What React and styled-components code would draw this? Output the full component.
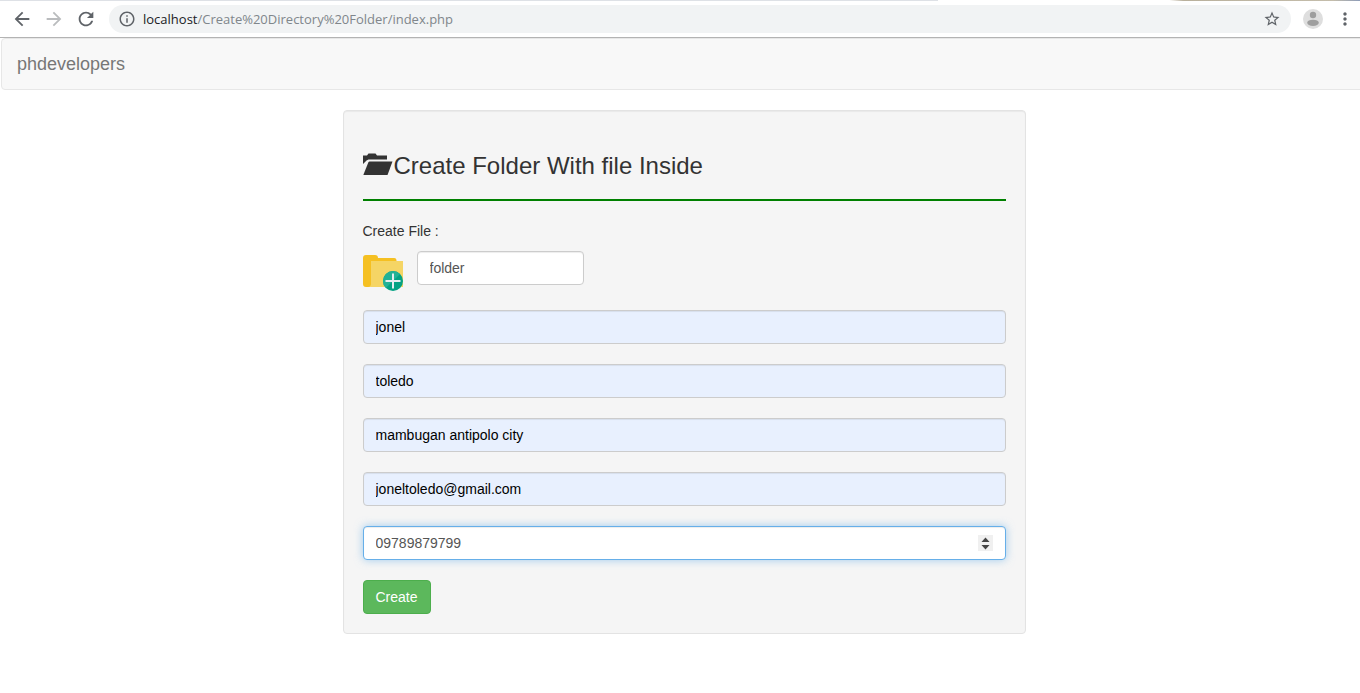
import { useState } from "react";
import styled, { createGlobalStyle, css } from "styled-components";
import {
  MdArrowBack,
  MdArrowForward,
  MdRefresh,
  MdInfoOutline,
  MdStarBorder,
  MdMoreVert
} from "react-icons/md";

const GlobalStyle = createGlobalStyle`
  * {
    box-sizing: border-box;
  }
  body {
    margin: 0;
    background: #fff;
    color: #333;
    font-family: "Liberation Sans", Arial, sans-serif;
    font-size: 14px;
    line-height: 20px;
    overflow-x: hidden;
  }
`;

const Toolbar = styled.header`
  display: flex;
  align-items: center;
  gap: 12px;
  height: 38px;
  padding: 0 5px 0 11px;
  border-bottom: 1px solid #b3b3b3;
  background: #fff
    linear-gradient(
      90deg,
      #dee1e6 69%,
      #fff 69%,
      #fff 86%,
      #b9b09c 87%,
      #c4bdab 98%,
      #8e9cb8 100%
    )
    top / 100% 1px no-repeat;
`;

const NavButtons = styled.div`
  display: flex;
  gap: 10px;
`;

const ToolButton = styled.button`
  display: flex;
  padding: 0;
  border: 0;
  background: none;
  color: ${props => (props.disabled ? "#babcbe" : "#5f6368")};
`;

const AddressBar = styled.div`
  flex: 1;
  display: flex;
  align-items: center;
  gap: 7px;
  height: 28px;
  padding: 0 10px 0 9px;
  border-radius: 14px;
  background: #f1f3f4;
  color: #5f6368;
`;

const Url = styled.span`
  flex: 1;
  color: #80868b;
  font-family: "Open Sans", "Noto Sans", sans-serif;
  font-size: 13px;
  b {
    color: #202124;
    font-weight: 400;
  }
`;

const Page = styled.div`
  margin: 0 -7px 0 1px;
`;

const Navbar = styled.nav`
  height: 52px;
  margin-bottom: 20px;
  padding: 15px;
  border: 1px solid #e7e7e7;
  border-radius: 4px;
  background: #f8f8f8;
  a {
    color: #777;
    font-size: 18px;
    text-decoration: none;
  }
`;

const Well = styled.main`
  width: 50%;
  margin: 0 auto 20px;
  padding: 19px;
  border: 1px solid #e3e3e3;
  border-radius: 4px;
  background: #f5f5f5;
  box-shadow: inset 0 1px 1px rgba(0, 0, 0, 0.05);
`;

const Title = styled.h3`
  display: flex;
  align-items: center;
  gap: 1px;
  margin: 20px 0 18px;
  color: #333;
  font-size: 24px;
  font-weight: 400;
  line-height: 31px;
`;

const Divider = styled.hr`
  margin: 0 0 20px;
  border: 0;
  border-top: 2px solid green;
`;

const Form = styled.form`
  display: flex;
  flex-direction: column;
  align-items: flex-start;
  gap: 20px;
`;

const FileGroup = styled.div`
  label {
    display: block;
    margin-bottom: 10px;
  }
`;

const FileRow = styled.div`
  display: flex;
  gap: 14px;
  height: 39px;
`;

const Input = styled.input`
  width: ${props => (props.$small ? "167px" : "100%")};
  height: 34px;
  padding: 6px 12px;
  border: 1px solid #ccc;
  border-radius: 4px;
  background: ${props => (props.$filled ? "#e8f0fe" : "#fff")};
  color: ${props => (props.$filled ? "#000" : "#555")};
  box-shadow: inset 0 1px 1px rgba(0, 0, 0, 0.075);
  font: inherit;
  outline: 0;
  appearance: textfield;
  &::-webkit-inner-spin-button {
    appearance: none;
  }
  ${props =>
    props.$active &&
    css`
      border-color: #66afe9;
      box-shadow: inset 0 1px 1px rgba(0, 0, 0, 0.075),
        0 0 8px rgba(102, 175, 233, 0.6);
    `}
`;

const NumberField = styled.div`
  position: relative;
  width: 100%;
`;

const Spinner = styled.div`
  position: absolute;
  top: 9px;
  right: 13px;
  display: flex;
  flex-direction: column;
  background: #f0f0f0;
  button {
    display: flex;
    padding: 0;
    border: 0;
    background: none;
  }
`;

const CreateButton = styled.button`
  height: 34px;
  padding: 6px 12px;
  border: 1px solid #4cae4c;
  border-radius: 4px;
  background: #5cb85c;
  color: #fff;
  font: inherit;
`;

const Avatar = () => (
  <svg width="20" height="20" viewBox="0 0 20 20">
    <circle cx="10" cy="10" r="10" fill="#dedede" />
    <circle cx="10" cy="6" r="3.2" fill="#9e9e9e" />
    <ellipse cx="10" cy="13.8" rx="5.8" ry="3.1" fill="#9e9e9e" />
  </svg>
);

const OpenFolder = () => (
  <svg width="30" height="28" viewBox="0 0 30 28" fill="#333">
    <path d="M0 12V3.500h4L5.500 1.500h7l1.500 2h10V7.500H5.500L3.500 8.500z" />
    <path d="M6.500 9.500H29.500L24.500 23H.5V22.500L5.500 10z" />
  </svg>
);

const AddFolder = () => (
  <svg width="40" height="41" viewBox="0 0 40 41">
    <path d="M3 4h9c2 0 3 1 3 3h16c2 0 2.500 1 2.500 3v26H3c-2 0-3-1-3-3V7c0-2 1-3 3-3z" fill="#f5c022" />
    <path d="M8 10h32v26H5c2 0 3-1.500 3-3z" fill="#f5d565" />
    <circle cx="30" cy="30" r="10" fill="#04a283" />
    <path d="M22.900 37.100A10 10 0 0 1 37.100 22.900z" fill="#22b296" />
    <path d="M30 22.500v15M22.500 30h15" stroke="#e6edf0" strokeWidth="2" />
  </svg>
);

const fields = [
  { name: "firstname", label: "First name", value: "jonel" },
  { name: "lastname", label: "Last name", value: "toledo" },
  { name: "address", label: "Address", value: "mambugan antipolo city" },
  { name: "email", label: "Email", value: "joneltoledo@gmail.com", type: "email" }
];

const Contact = () => {
  const [value, setValue] = useState("09789879799");
  const step = amount => () =>
    setValue(String(Number(value) + amount).padStart(11, "0"));
  return (
    <NumberField>
      <Input
        type="number"
        name="contact"
        aria-label="Contact number"
        value={value}
        onChange={e => setValue(e.target.value)}
        $active
      />
      <Spinner>
        <button type="button" aria-label="Increase" onClick={step(1)}>
          <svg width="15" height="8" viewBox="0 0 15 8">
            <path d="M7.500 2.500L11.500 7h-8z" fill="#444" />
          </svg>
        </button>
        <button type="button" aria-label="Decrease" onClick={step(-1)}>
          <svg width="15" height="8" viewBox="0 0 15 8">
            <path d="M3.500 2h8l-4 4.500z" fill="#444" />
          </svg>
        </button>
      </Spinner>
    </NumberField>
  );
};

const App = () => (
  <>
    <GlobalStyle />
    <Toolbar>
      <NavButtons>
        <ToolButton aria-label="Back">
          <MdArrowBack size={22} />
        </ToolButton>
        <ToolButton aria-label="Forward" disabled>
          <MdArrowForward size={22} />
        </ToolButton>
        <ToolButton aria-label="Reload">
          <MdRefresh size={22} />
        </ToolButton>
      </NavButtons>
      <AddressBar>
        <MdInfoOutline size={18} />
        <Url>
          <b>localhost</b>/Create%20Directory%20Folder/index.php
        </Url>
        <ToolButton aria-label="Bookmark">
          <MdStarBorder size={18} />
        </ToolButton>
      </AddressBar>
      <ToolButton aria-label="Profile">
        <Avatar />
      </ToolButton>
      <ToolButton aria-label="Menu">
        <MdMoreVert size={20} />
      </ToolButton>
    </Toolbar>
    <Page>
      <Navbar>
        <a href="#home">phdevelopers</a>
      </Navbar>
      <Well>
        <Title>
          <OpenFolder />
          Create Folder With file Inside
        </Title>
        <Divider />
        <Form onSubmit={e => e.preventDefault()}>
          <FileGroup>
            <label htmlFor="file">Create File :</label>
            <FileRow>
              <AddFolder />
              <Input id="file" name="file" defaultValue="folder" $small />
            </FileRow>
          </FileGroup>
          {fields.map(field => (
            <Input
              key={field.name}
              type={field.type || "text"}
              name={field.name}
              aria-label={field.label}
              defaultValue={field.value}
              $filled
            />
          ))}
          <Contact />
          <CreateButton type="submit">Create</CreateButton>
        </Form>
      </Well>
    </Page>
  </>
);

export default App;
